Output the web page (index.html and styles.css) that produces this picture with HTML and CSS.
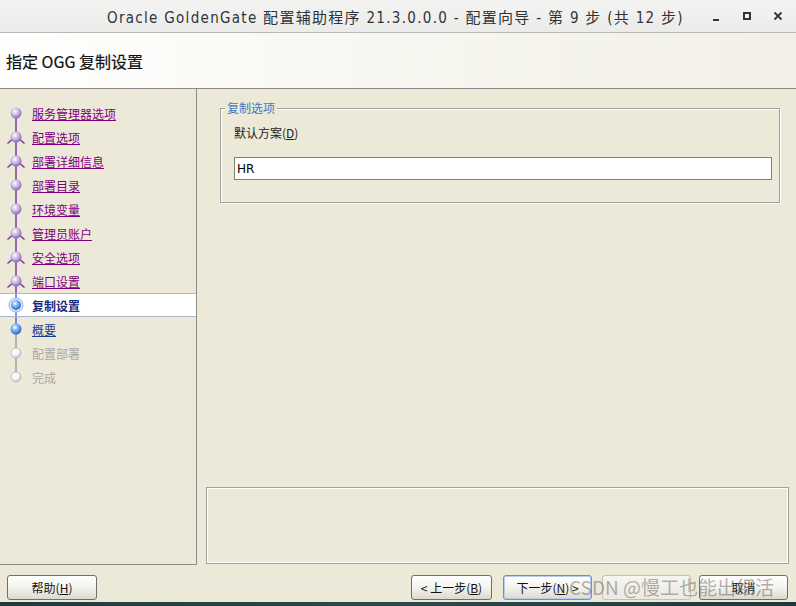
FILE: index.html
```html
<!DOCTYPE html>
<html>
<head>
<meta charset="utf-8">
<link rel="stylesheet" href="styles.css">
</head>
<body>
<svg class="defs" width="0" height="0">
  <defs>
    <radialGradient id="gp" cx="40%" cy="35%" r="65%">
      <stop offset="0" stop-color="#ffffff"/>
      <stop offset="0.5" stop-color="#c8b8e4"/>
      <stop offset="1" stop-color="#8a6cb8"/>
    </radialGradient>
    <radialGradient id="gb" cx="40%" cy="35%" r="65%">
      <stop offset="0" stop-color="#ffffff"/>
      <stop offset="0.45" stop-color="#7fb0f0"/>
      <stop offset="1" stop-color="#2a66cc"/>
    </radialGradient>
    <radialGradient id="gw" cx="40%" cy="35%" r="65%">
      <stop offset="0" stop-color="#ffffff"/>
      <stop offset="0.6" stop-color="#f2f2f6"/>
      <stop offset="1" stop-color="#b8bcc8"/>
    </radialGradient>
  </defs>
</svg>
<div class="window">
  <div class="titlebar">
    <span class="title">Oracle GoldenGate 配置辅助程序 21.3.0.0.0 - 配置向导 - 第 9 步 (共 12 步)</span>
    <div class="wctl">
      <svg width="12" height="12" viewBox="0 0 12 12"><rect x="3" y="9" width="6" height="2" fill="#2e3436"/></svg>
      <svg width="12" height="12" viewBox="0 0 12 12"><rect x="3" y="3" width="6" height="6" fill="none" stroke="#2e3436" stroke-width="2"/></svg>
      <svg width="12" height="12" viewBox="0 0 12 12"><path d="M2.5 2.5 L9.5 9.5 M9.5 2.5 L2.5 9.5" stroke="#2e3436" stroke-width="1.8"/></svg>
    </div>
  </div>
  <div class="header">指定 OGG 复制设置</div>
  <div class="main">
    <div class="steps">
      <div class="step">
        <svg class="ico" width="32" height="24"><line x1="16" y1="12" x2="16" y2="24" class="lp"/><circle cx="16" cy="12" r="5.5" fill="url(#gp)"/></svg>
        <a class="lnk">服务管理器选项</a>
      </div>
      <div class="step">
        <svg class="ico" width="32" height="24"><line x1="16" y1="0" x2="16" y2="24" class="lp"/><path d="M12.5 14 L7.5 18.5 M19.5 14 L24.5 18.5" class="lp"/><circle cx="16" cy="12" r="5.5" fill="url(#gp)"/></svg>
        <a class="lnk">配置选项</a>
      </div>
      <div class="step">
        <svg class="ico" width="32" height="24"><line x1="16" y1="0" x2="16" y2="24" class="lp"/><path d="M12.5 14 L7.5 18.5 M19.5 14 L24.5 18.5" class="lp"/><circle cx="16" cy="12" r="5.5" fill="url(#gp)"/></svg>
        <a class="lnk">部署详细信息</a>
      </div>
      <div class="step">
        <svg class="ico" width="32" height="24"><line x1="16" y1="0" x2="16" y2="24" class="lp"/><circle cx="16" cy="12" r="5.5" fill="url(#gp)"/></svg>
        <a class="lnk">部署目录</a>
      </div>
      <div class="step">
        <svg class="ico" width="32" height="24"><line x1="16" y1="0" x2="16" y2="24" class="lp"/><circle cx="16" cy="12" r="5.5" fill="url(#gp)"/></svg>
        <a class="lnk">环境变量</a>
      </div>
      <div class="step">
        <svg class="ico" width="32" height="24"><line x1="16" y1="0" x2="16" y2="24" class="lp"/><path d="M12.5 14 L7.5 18.5 M19.5 14 L24.5 18.5" class="lp"/><circle cx="16" cy="12" r="5.5" fill="url(#gp)"/></svg>
        <a class="lnk">管理员账户</a>
      </div>
      <div class="step">
        <svg class="ico" width="32" height="24"><line x1="16" y1="0" x2="16" y2="24" class="lp"/><path d="M12.5 14 L7.5 18.5 M19.5 14 L24.5 18.5" class="lp"/><circle cx="16" cy="12" r="5.5" fill="url(#gp)"/></svg>
        <a class="lnk">安全选项</a>
      </div>
      <div class="step">
        <svg class="ico" width="32" height="24"><line x1="16" y1="0" x2="16" y2="24" class="lp"/><path d="M12.5 14 L7.5 18.5 M19.5 14 L24.5 18.5" class="lp"/><circle cx="16" cy="12" r="5.5" fill="url(#gp)"/></svg>
        <a class="lnk">端口设置</a>
      </div>
      <div class="step current">
        <svg class="ico" width="32" height="22"><line x1="16" y1="0" x2="16" y2="22" class="lb"/><circle cx="16" cy="11" r="7" fill="#dbe8fa" stroke="#8fb4e6" stroke-width="1"/><circle cx="16" cy="11" r="5" fill="url(#gb)"/></svg>
        <span class="cur">复制设置</span>
      </div>
      <div class="step">
        <svg class="ico" width="32" height="24"><line x1="16" y1="0" x2="16" y2="12" class="lb"/><line x1="16" y1="12" x2="16" y2="24" class="lg"/><circle cx="16" cy="12" r="5.5" fill="url(#gb)"/></svg>
        <a class="lnk blue">概要</a>
      </div>
      <div class="step">
        <svg class="ico" width="32" height="24"><line x1="16" y1="0" x2="16" y2="24" class="lg"/><circle cx="16" cy="12" r="5" fill="url(#gw)" stroke="#b4b8c4" stroke-width="0.8"/></svg>
        <span class="dis">配置部署</span>
      </div>
      <div class="step">
        <svg class="ico" width="32" height="24"><line x1="16" y1="0" x2="16" y2="12" class="lg"/><circle cx="16" cy="12" r="5" fill="url(#gw)" stroke="#b4b8c4" stroke-width="0.8"/></svg>
        <span class="dis">完成</span>
      </div>
    </div>
    <div class="content">
      <div class="group">
        <span class="legend">复制选项</span>
        <div class="label">默认方案(<u>D</u>)</div>
        <div class="field">HR</div>
      </div>
      <div class="msgbox"></div>
    </div>
  </div>
  <div class="footer">
    <button class="btn help">帮助(<u>H</u>)</button>
    <div class="navbtns">
      <button class="btn back">&lt; 上一步(<u>B</u>)</button>
      <button class="btn next focus">下一步(<u>N</u>) &gt;</button>
      <button class="btn finish disabled"></button>
      <button class="btn cancel">取消</button>
    </div>
  </div>
  <div class="taskbar"></div>
  <div class="watermark">CSDN @慢工也能出细活</div>
</div>
</body>
</html>
```
FILE: styles.css
```css
html, body {
  margin: 0;
  padding: 0;
}
body {
  width: 796px;
  height: 606px;
  overflow: hidden;
  background: #ece9d8;
  font-family: "Noto Sans CJK SC", "DejaVu Sans", sans-serif;
  font-size: 12px;
}
.defs {
  position: absolute;
  width: 0;
  height: 0;
}
.window {
  position: relative;
  width: 796px;
  height: 606px;
  display: flex;
  flex-direction: column;
}
.titlebar {
  height: 32px;
  border-bottom: 1px solid #b8b8b4;
  background: linear-gradient(#f4f4f3, #ebebea);
  display: flex;
  align-items: center;
  padding-left: 107px;
  color: #2e3436;
}
.title {
  font-family: "DejaVu Sans Condensed", "Noto Sans CJK SC", sans-serif;
  font-size: 15px;
  white-space: nowrap;
  letter-spacing: 1.3px;
}
.wctl {
  margin-left: auto;
  display: flex;
  gap: 19px;
  padding-right: 12px;
}
.header {
  height: 56px;
  box-sizing: border-box;
  border-bottom: 1px solid #8c8c8c;
  background: linear-gradient(90deg, #ffffff 0%, #f7f6f0 50%, #f2f0e6 100%);
  display: flex;
  align-items: center;
  padding-left: 6px;
  padding-top: 1px;
  font-size: 16px;
  color: #111;
  -webkit-text-stroke: 0.2px #111;
}
.main {
  height: 476px;
  display: flex;
}
.steps {
  width: 196px;
  border-right: 1px solid #8c8c8c;
  border-bottom: 1px solid #8c8c8c;
  padding-top: 12px;
  height: 463px;
}
.step {
  height: 24px;
  display: flex;
  align-items: center;
}
.step.current {
  box-sizing: border-box;
  background: #ffffff;
  border-top: 1px solid #a7b5cf;
  border-bottom: 1px solid #a7b5cf;
}
.ico {
  flex: none;
  display: block;
}
.lp {
  stroke: #7d2e96;
  stroke-width: 1.4;
  fill: none;
}
.lb {
  stroke: #3a70dc;
  stroke-width: 1.4;
}
.lg {
  stroke: #8c8c8c;
  stroke-width: 1.2;
}
.lnk {
  color: #80007f;
  text-decoration: underline;
  line-height: 14px;
  padding-top: 1px;
}
.lnk.blue {
  color: #1d3c92;
}
.cur {
  color: #152a80;
  font-weight: bold;
}
.dis {
  color: #a8a8a8;
}
.content {
  flex: 1;
  display: flex;
  flex-direction: column;
  padding: 19px 7px 1px 9px;
}
.group {
  position: relative;
  margin: 0 9px 0 14px;
  height: 95px;
  box-sizing: border-box;
  border: 1px solid #a0a0a0;
  box-shadow: 1px 1px 0 #ffffff, inset 1px 1px 0 #ffffff;
  padding: 15px 7px 0 13px;
}
.legend {
  position: absolute;
  top: -9px;
  left: 4px;
  padding: 0 2px;
  background: #ece9d8;
  color: #3d78c8;
  line-height: 16px;
}
.label {
  color: #222;
  line-height: 18px;
}
.field {
  margin-top: 15px;
  height: 23px;
  box-sizing: border-box;
  background: #ffffff;
  border: 1px solid #7e7e7e;
  display: flex;
  align-items: center;
  padding-left: 2px;
  font-family: "DejaVu Sans", sans-serif;
  font-size: 12px;
  color: #000;
}
.msgbox {
  margin-top: auto;
  height: 77px;
  box-sizing: border-box;
  border: 1px solid #a0a0a0;
  box-shadow: inset 1px 1px 0 #ffffff, inset -1px -1px 0 #ffffff;
}
.footer {
  height: 37px;
  box-sizing: border-box;
  padding: 10px 8px 0 7px;
  display: flex;
  align-items: flex-start;
}
.navbtns {
  margin-left: auto;
  display: flex;
}
.btn {
  height: 25px;
  box-sizing: border-box;
  border: 1px solid #6f6f6f;
  border-radius: 3px;
  background: linear-gradient(#ffffff 0%, #f4f3ee 50%, #dcd9cf 100%);
  font-family: "Noto Sans CJK SC", sans-serif;
  font-size: 12px;
  color: #111;
  padding: 0;
}
.help { width: 90px; }
.back { width: 81px; }
.next { width: 89px; margin-left: 11px; }
.finish { width: 89px; margin-left: 10px; }
.cancel { width: 89px; margin-left: 8px; }
.focus {
  border-color: #6c8fc4;
  box-shadow: inset 0 0 0 1px #b8cdec;
}
.disabled {
  border-color: #c2c0b8;
  background: linear-gradient(#f6f5f0, #ebe9e0);
}
.taskbar {
  height: 4px;
  background: linear-gradient(90deg, #1e3c3e, #2a4a4c 50%, #1c3a3c);
}
.watermark {
  position: absolute;
  left: 569px;
  top: 574px;
  font-family: "Noto Sans CJK SC", sans-serif;
  font-size: 19px;
  line-height: 26px;
  color: rgba(110, 110, 110, 0.55);
  white-space: nowrap;
  pointer-events: none;
}
```
